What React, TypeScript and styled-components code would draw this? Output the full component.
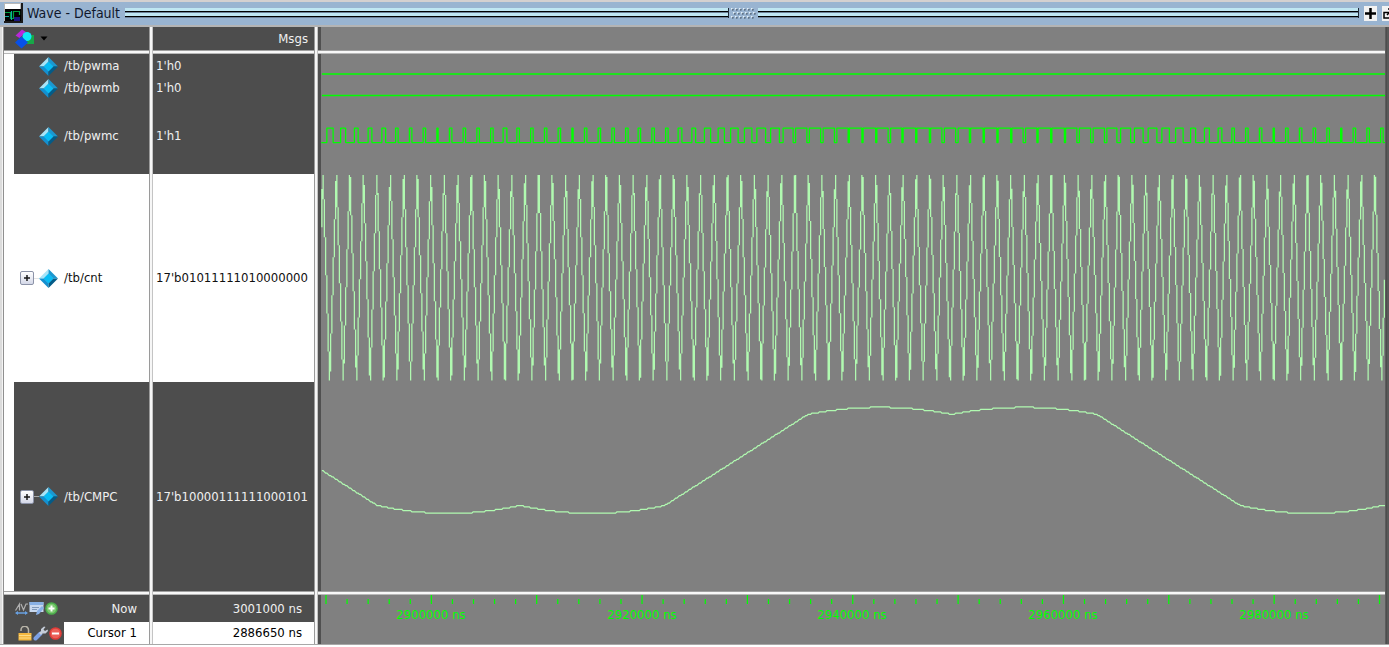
import React from "react";
import styled, { createGlobalStyle } from "styled-components";

const GlobalStyle = createGlobalStyle`
  html, body { margin: 0; background: #fff; }
  body {
    font-family: "DejaVu Sans Condensed", Tahoma, "Noto Sans", sans-serif;
    font-size: 13px;
    line-height: 16px;
    overflow: hidden;
  }
  *, *::before, *::after { box-sizing: border-box; }
`;

const dark = "#4d4d4d";
const canvasGrey = "#808080";
const green = "#00ff00";
const pale = "#b0fab0";

/* ---------- window frame ---------- */

const Window = styled.main`
  display: flex;
  flex-direction: column;
  min-height: 100vh;
  background: #fff;
`;

const TitleBar = styled.header`
  display: flex;
  align-items: center;
  height: 27px;
  padding: 0 0 1px 4px;
  background: #99b4d1;
  border-top: 2px solid #d4d0d0;
  border-bottom: 2px solid #b4b4b4;
  overflow: hidden;
`;

const Title = styled.h1`
  margin: 0 5px 0 4px;
  font-size: 14px;
  font-weight: normal;
  line-height: 16px;
  white-space: nowrap;
  color: #10182c;
`;

const Ridge = styled.div<{ $grow: number }>`
  flex: ${(p) => p.$grow} 1 0;
  height: 10px;
  border-right: 1px solid #1c2836;
  background: linear-gradient(
    #bfe6f2 0 3px,
    #000 3px 4px,
    #6c8098 4px 5px,
    #bfe6f2 5px 8px,
    #000 8px 9px,
    #6c8098 9px 10px
  );
`;

const Grip = styled.svg`
  flex: none;
  margin: 0 2px;
`;

const TitleButton = styled.button`
  flex: none;
  display: grid;
  place-items: center;
  width: 13px;
  height: 15px;
  margin-left: 5px;
  padding: 0;
  border: 0;
  background: #f2f2f2;
  overflow: hidden;
`;

const TitleButtons = styled.div`
  flex: none;
  display: flex;
  width: 30px;
  overflow: hidden;
`;

const Panes = styled.div`
  display: grid;
  grid-template-columns: 4px 145px 4px 161px 4px minmax(0, 1fr) 4px;
  grid-template-rows: auto 4px auto 4px auto;
  border-bottom: 1px solid #a8a8a8;
`;

const Frame = styled.div`
  grid-column: 1;
  grid-row: 1 / -1;
  background: #f4f4f4;
  border-left: 2px solid #dcdcdc;
  border-right: 1px solid #909090;
`;

const EdgeStrip = styled.div`
  grid-column: 7;
  grid-row: 1 / -1;
  background: linear-gradient(90deg, #5c5c5c 0 1px, ${dark} 1px 2px, #5a5a5a 2px);
`;

const VSash = styled.div<{ $col: number }>`
  grid-column: ${(p) => p.$col};
  grid-row: 1 / -1;
  z-index: 1;
  background: #f6f6f6;
  border-left: 1px solid #9a9a9a;
  border-right: 1px solid #c4c4c4;
`;

const HSash = styled.div<{ $row: number }>`
  grid-column: 2 / -1;
  grid-row: ${(p) => p.$row};
  background: linear-gradient(#a0a0a0 0 1px, #f8f8f8 1px 3px, #b8b8b8 3px 4px);
`;

/* ---------- panes ---------- */

const HeadCell = styled.div<{ $col: number; $end?: boolean }>`
  grid-column: ${(p) => p.$col};
  grid-row: 1;
  display: flex;
  align-items: center;
  justify-content: ${(p) => (p.$end ? "flex-end" : "flex-start")};
  height: 23px;
  padding: 0 6px 0 11px;
  background: ${dark};
  color: #f0f0f0;
`;

const MenuButton = styled.button`
  display: flex;
  align-items: center;
  gap: 5px;
  padding: 0;
  border: 0;
  background: none;
`;

const Column = styled.div<{ $col: number; $gutter?: boolean }>`
  grid-column: ${(p) => p.$col};
  grid-row: 3;
  display: flex;
  flex-direction: column;
  padding-left: ${(p) => (p.$gutter ? "10px" : "0")};
  background: #fff;
`;

const Group = styled.div<{ $height: number; $light?: boolean }>`
  height: ${(p) => p.$height}px;
  background: ${(p) => (p.$light ? "#fff" : dark)};
  color: ${(p) => (p.$light ? "#101010" : "#f0f0f0")};
`;

const Row = styled.div<{ $height: number; $drop?: number }>`
  display: flex;
  align-items: center;
  height: ${(p) => p.$height}px;
  padding-top: ${(p) => p.$drop ?? 0}px;
  white-space: nowrap;
`;

const Slot = styled.div`
  flex: none;
  display: flex;
  align-items: center;
  width: 25px;
  padding-left: 6px;
`;

const Expand = styled.button`
  flex: none;
  display: grid;
  place-items: center;
  width: 14px;
  height: 14px;
  padding: 0;
  border: 1px solid #8c93a8;
  border-radius: 2px;
  background: linear-gradient(#ffffff, #d4d8e8);
`;

const Link = styled.span<{ $light?: boolean }>`
  flex: 1;
  height: 1px;
  background: ${(p) => (p.$light ? "#e4e4e4" : "#a8a8a8")};
`;

const Name = styled.span`
  margin-left: 6px;
`;

const Value = styled.span`
  padding-left: 3px;
`;

const WavePane = styled.div<{ $row: number }>`
  grid-column: 6;
  grid-row: ${(p) => p.$row};
  min-width: 0;
  border-left: 3px solid #505050;
  background: ${canvasGrey};
  overflow: hidden;
`;

const Plot = styled.svg`
  display: block;
  width: 100%;
`;

const FootCell = styled.div<{ $col: number }>`
  grid-column: ${(p) => p.$col};
  grid-row: 5;
  display: flex;
  flex-direction: column;
`;

const FootRow = styled.div<{ $light?: boolean }>`
  display: flex;
  align-items: center;
  justify-content: flex-end;
  height: ${(p) => (p.$light ? "22px" : "27px")};
  padding-right: 12px;
  white-space: nowrap;
  background: ${(p) => (p.$light ? "#fff" : dark)};
  color: ${(p) => (p.$light ? "#000" : "#f0f0f0")};
`;

const Tools = styled.div<{ $cursor?: boolean }>`
  display: flex;
  align-items: center;
  gap: 1px;
  align-self: stretch;
  width: 60px;
  padding-left: ${(p) => (p.$cursor ? "14px" : "11px")};
  margin-right: auto;
  background: ${dark};
`;

const Tool = styled.button`
  display: block;
  padding: 0;
  border: 0;
  background: none;
  line-height: 0;
`;

/* ---------- icons ---------- */

const WaveIcon = () => (
  <svg width="19" height="20" viewBox="0 0 19 20" aria-hidden="true">
    <rect width="19" height="20" fill="#1a1a1a" />
    <rect width="17" height="18" fill="#b8b8b8" />
    <rect x="1" y="1" width="15" height="5" fill="#fff" />
    <rect x="1" y="6" width="16" height="12" fill="#000" />
    <path d="M1 9.500H6.500V15.500H9.500V8.500H15.500V12" fill="none" stroke="#00a040" strokeWidth="1.200" />
    <path d="M1 13.500H5M7.500 8V17" fill="none" stroke="#10b0a0" strokeWidth="1.200" />
    <rect x="10" y="14" width="6" height="4" fill="#1c1880" />
  </svg>
);

const ShapesIcon = () => (
  <svg width="20" height="20" viewBox="0 0 20 20" aria-hidden="true">
    <path d="M0.500 6.500L7 0.500L11 3L4.500 9Z" fill="#b828d8" />
    <path d="M13 6H19V15H11Z" fill="#18a848" />
    <circle cx="12" cy="7.500" r="4.500" fill="#10e8f8" />
    <path d="M6.500 7.500L13 13.500L6.500 19.500L0 13.500Z" fill="#0850e8" />
  </svg>
);

const Diamond = () => (
  <svg width="19" height="19" viewBox="0 0 19 19" aria-hidden="true">
    <path d="M9.500 0L0 9.500H5L9.500 5Z" fill="#a8e4f8" />
    <path d="M9.500 0L19 9.500H14L9.500 5Z" fill="#1c98d0" />
    <path d="M0 9.500L9.500 19V14L5 9.500Z" fill="#1490d0" />
    <path d="M19 9.500L9.500 19V14L14 9.500Z" fill="#045c88" />
    <path d="M9.500 4.500L14.500 9.500L9.500 14.500L4.500 9.500Z" fill="#08bcf4" />
  </svg>
);

const PlusGlyph = () => (
  <svg width="8" height="8" viewBox="0 0 8 8" aria-hidden="true">
    <path d="M4 1V7M1 4H7" stroke="#181818" strokeWidth="1.500" />
  </svg>
);

const EdgesIcon = () => (
  <svg width="13" height="14" viewBox="0 0 13 14" aria-hidden="true">
    <path d="M0.500 8.500L4.500 2V8.500M6 2L8.500 8L11 2H13" fill="none" stroke="#b0b0b0" strokeWidth="1.200" />
    <path d="M1 11H12" stroke="#68a0e0" strokeWidth="1.500" />
    <path d="M0 11L3 9V13ZM13 11L10 9V13Z" fill="#68a0e0" />
  </svg>
);

const NoteIcon = () => (
  <svg width="15" height="15" viewBox="0 0 15 15" aria-hidden="true">
    <rect x="0.500" y="1" width="14" height="10" fill="#c8d8ee" />
    <rect x="0.500" y="1" width="14" height="3" fill="#88b0e4" />
    <path d="M3 6.500H10M3 8.500H8" stroke="#8098b8" />
    <path d="M7 14L8 10L13 5L15 7L10 13Z" fill="#88b0e8" />
  </svg>
);

const RoundIcon = ({ kind }: { kind: "add" | "remove" }) => (
  <svg width="13" height="13" viewBox="0 0 13 13" aria-hidden="true">
    <circle cx="6.500" cy="6.500" r="6.300" fill={kind === "add" ? "#4cae4c" : "#e03c38"} />
    <circle cx="6.500" cy="6.500" r="4.800" fill={kind === "add" ? "#7cc870" : "#ec6058"} />
    <path d={kind === "add" ? "M6.500 3.500V9.500M3.500 6.500H9.500" : "M3 6.500H10"} stroke="#fff" strokeWidth="2" />
  </svg>
);

const LockIcon = () => (
  <svg width="14" height="15" viewBox="0 0 14 15" aria-hidden="true">
    <path d="M3 5V4A3.500 3.500 0 0 1 10.500 4V8" fill="none" stroke="#b8b4a8" strokeWidth="1.500" />
    <rect x="0.500" y="7" width="13" height="7.500" fill="#f4b840" />
    <path d="M1 9.500H13M1 12H13" stroke="#fcdc88" />
  </svg>
);

const WrenchIcon = () => (
  <svg width="15" height="15" viewBox="0 0 15 15" aria-hidden="true">
    <path d="M2.500 12.500L7.500 7.500" stroke="#7ca0e4" strokeWidth="4" strokeLinecap="round" />
    <path d="M7 8L10 5" stroke="#c8d0dc" strokeWidth="2.500" />
    <path d="M11 0.500L8 3V6L10 7.500H12.500L15 5L14.500 3.500L12 5L10.500 3.500L12.500 1Z" fill="#c4ccd8" />
  </svg>
);

/* ---------- waveforms ---------- */

/* Traces are plotted on a 1.25px grid, as the simulator does at 120 dpi. */
const CELL = 1.25;
const ORIGIN = 321.25;
const TOP = 54;
const COLUMNS = 940;
const PERIOD = 13.487;
const PEAK = 322.96;

const at = (x: number) => (x - ORIGIN) / CELL;
const down = (y: number) => (y - TOP) / CELL;

/* Third-harmonic modulation reference, in pixels from the top of the window. */
const reference = (x: number): number => {
  const span = 863;
  const t = (((x - 377) % span) + span) % span;
  const arc = (a: number, w: number, base: number, h: number) => {
    const s = (t - a) / w;
    return base + h * 4 * s * (1 - s);
  };
  if (t < 143) return arc(0, 143, 505, 8);
  if (t < 288) return arc(143, 145, 505, 8);
  if (t < 431) return 505 - ((t - 288) / 143) * 91;
  if (t < 575) return arc(431, 144, 414, -7);
  if (t < 720) return arc(575, 145, 414, -7);
  return 414 + ((t - 720) / 143) * 91;
};

const referencePath = () => {
  const pts: string[] = [];
  for (let c = 0; c < COLUMNS; c++) {
    const x = ORIGIN + (c + 0.5) * CELL;
    const y = Math.round(down(reference(x)));
    pts.push(`${c + 0.5} ${y + 0.3}`);
  }
  return "M" + pts.join("L");
};

const counterPath = () => {
  const top = down(175);
  const bottom = down(380.5);
  const peak = at(PEAK);
  const period = PERIOD / CELL;
  const half = period / 2;
  const value = (u: number) => {
    const phase = ((((u - peak) % period) + period) % period) / half;
    const f = phase < 1 ? phase : 2 - phase;
    return top + (bottom - top) * f;
  };
  let d = "";
  for (let c = 0; c < COLUMNS; c++) {
    let lo = Math.min(value(c), value(c + 1));
    let hi = Math.max(value(c), value(c + 1));
    const k = Math.ceil((c - peak) / half);
    if (peak + k * half < c + 1) {
      if (k % 2 === 0) lo = top;
      else hi = bottom;
    }
    d += `M${c + 0.5} ${lo.toFixed(1)}V${hi.toFixed(1)}`;
  }
  return d;
};

const pwmPath = () => {
  const high = down(128);
  const low = down(142.6);
  let d = `M0 ${low}`;
  for (let n = 0; n < 88; n++) {
    const centre = PEAK + PERIOD * (n + 0.5);
    const duty = 0.5 + (464 - reference(centre)) / 145;
    const rise = Math.floor(at(centre - (duty * PERIOD) / 2)) + 0.5;
    const fall = Math.floor(at(centre + (duty * PERIOD) / 2)) + 0.5;
    d += `H${rise}V${high}H${fall}V${low}`;
  }
  return d;
};

const COUNTER = counterPath();
const REFERENCE = referencePath();
const PWM = pwmPath();

const Waves = () => (
  <Plot height="537" role="img" aria-label="Signal waveforms">
    <g transform="translate(0.25 0) scale(1.25)" fill="none" strokeWidth="1">
      <path d={`M0.500 ${down(74)}H${COLUMNS}M0.500 ${down(95.5)}H${COLUMNS}`} stroke={green} strokeWidth="1.200" />
      <path d={PWM} stroke={green} strokeLinejoin="bevel" />
      <path d={COUNTER} stroke={pale} />
      <path d={REFERENCE} stroke={pale} />
    </g>
  </Plot>
);

const Ruler = () => {
  const ticks = Array.from({ length: 56 }, (_, i) => i);
  const labels = [2900000, 2920000, 2940000, 2960000, 2980000];
  const step = 21.07;
  return (
    <Plot height="49" role="img" aria-label="Time scale">
      {ticks.map((i) => (
        <path
          key={i}
          d={`M${(5 + i * step).toFixed(2)} ${i % 5 === 0 ? 0 : 4}V9`}
          stroke={green}
          strokeWidth="1.250"
        />
      ))}
      {labels.map((t, i) => (
        <text key={t} x={Math.round(110 + i * 210.7)} y="24" fill={green} textAnchor="middle">
          {t} ns
        </text>
      ))}
    </Plot>
  );
};

/* ---------- data ---------- */

type Signal = { name: string; value: string; height: number; drop?: number; expandable?: boolean };
type SignalGroup = { height: number; light?: boolean; signals: Signal[] };

const groups: SignalGroup[] = [
  {
    height: 120,
    signals: [
      { name: "/tb/pwma", value: "1'h0", height: 24 },
      { name: "/tb/pwmb", value: "1'h0", height: 20 },
      { name: "/tb/pwmc", value: "1'h1", height: 76 },
    ],
  },
  {
    height: 208,
    light: true,
    signals: [{ name: "/tb/cnt", value: "17'b01011111010000000", height: 208, expandable: true }],
  },
  {
    height: 209,
    signals: [{ name: "/tb/CMPC", value: "17'b10000111111000101", height: 209, drop: 20, expandable: true }],
  },
];

const gripDots = [0, 1, 2].flatMap((r) => [0, 1, 2, 3, 4, 5].map((c) => ({ x: c * 4 + (r % 2) * 2, y: r * 4 })));

export default function App() {
  return (
    <Window>
      <GlobalStyle />
      <TitleBar>
        <WaveIcon />
        <Title>Wave - Default</Title>
        <Ridge $grow={603} />
        <Grip width="25" height="11" viewBox="0 0 25 11" aria-hidden="true">
          {gripDots.map((d) => (
            <g key={`${d.x}-${d.y}`}>
              <rect x={d.x + 1} y={d.y + 1} width="1.500" height="1.500" fill="#3c4c60" />
              <rect x={d.x} y={d.y} width="1.500" height="1.500" fill="#e4f0f8" />
            </g>
          ))}
        </Grip>
        <Ridge $grow={601} />
        <TitleButtons>
          <TitleButton aria-label="Maximize">
            <svg width="11" height="11" viewBox="0 0 11 11">
              <path d="M5.500 0V11M0 5.500H11" stroke="#000" strokeWidth="2.500" />
            </svg>
          </TitleButton>
          <TitleButton aria-label="Undock">
            <svg width="11" height="11" viewBox="0 0 11 11">
              <path d="M1 4.500H7V10H1ZM4 7L10 1M5 1H10V6" fill="none" stroke="#000" strokeWidth="1.500" />
            </svg>
          </TitleButton>
        </TitleButtons>
      </TitleBar>

      <Panes>
        <Frame />
        <VSash $col={3} />
        <VSash $col={5} />
        <HSash $row={2} />
        <HSash $row={4} />
        <EdgeStrip />

        <HeadCell $col={2}>
          <MenuButton aria-label="Object filter">
            <ShapesIcon />
            <svg width="8" height="5" viewBox="0 0 8 5" aria-hidden="true">
              <path d="M0.500 0.500H7.500L4 4.500Z" fill="#000" />
            </svg>
          </MenuButton>
        </HeadCell>
        <HeadCell $col={4} $end>
          Msgs
        </HeadCell>
        <WavePane $row={1} />

        <Column $col={2} $gutter>
          {groups.map((g) => (
            <Group key={g.signals[0].name} $height={g.height} $light={g.light}>
              {g.signals.map((s) => (
                <Row key={s.name} $height={s.height} $drop={s.drop}>
                  <Slot>
                    {s.expandable && (
                      <>
                        <Expand aria-label={`Expand ${s.name}`}>
                          <PlusGlyph />
                        </Expand>
                        <Link $light={g.light} />
                      </>
                    )}
                  </Slot>
                  <Diamond />
                  <Name>{s.name}</Name>
                </Row>
              ))}
            </Group>
          ))}
        </Column>
        <Column $col={4}>
          {groups.map((g) => (
            <Group key={g.signals[0].name} $height={g.height} $light={g.light}>
              {g.signals.map((s) => (
                <Row key={s.name} $height={s.height} $drop={s.drop}>
                  <Value>{s.value}</Value>
                </Row>
              ))}
            </Group>
          ))}
        </Column>
        <WavePane $row={3}>
          <Waves />
        </WavePane>

        <FootCell $col={2}>
          <FootRow>
            <Tools>
              <Tool aria-label="Edges"><EdgesIcon /></Tool>
              <Tool aria-label="Edit grid"><NoteIcon /></Tool>
              <Tool aria-label="Add cursor"><RoundIcon kind="add" /></Tool>
            </Tools>
            Now
          </FootRow>
          <FootRow $light>
            <Tools $cursor>
              <Tool aria-label="Lock cursor"><LockIcon /></Tool>
              <Tool aria-label="Edit cursor"><WrenchIcon /></Tool>
              <Tool aria-label="Remove cursor"><RoundIcon kind="remove" /></Tool>
            </Tools>
            Cursor 1
          </FootRow>
        </FootCell>
        <FootCell $col={4}>
          <FootRow>3001000 ns</FootRow>
          <FootRow $light>2886650 ns</FootRow>
        </FootCell>
        <WavePane $row={5}>
          <Ruler />
        </WavePane>
      </Panes>
    </Window>
  );
}
